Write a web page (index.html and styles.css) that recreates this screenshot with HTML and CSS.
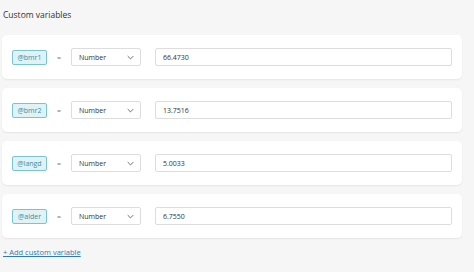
FILE: index.html
```html
<!DOCTYPE html>
<html lang="en">
<head>
  <meta charset="UTF-8" />
  <meta name="viewport" content="width=device-width, initial-scale=1.0" />
  <title>Custom variables</title>
  <link rel="stylesheet" href="styles.css">
</head>
<body>
  <div class="panel">
    <div class="title">Custom variables</div>

    <div class="card">
      <span class="badge">@bmr1</span>
      <span class="equals">=</span>
      <div class="select">
        <span>Number</span>
        <svg class="chevron" viewBox="0 0 10 6" width="7" height="5"><path d="M1 1l4 4 4-4" fill="none" stroke="#555" stroke-width="1.2"/></svg>
      </div>
      <div class="input">66.4730</div>
    </div>

    <div class="card">
      <span class="badge">@bmr2</span>
      <span class="equals">=</span>
      <div class="select">
        <span>Number</span>
        <svg class="chevron" viewBox="0 0 10 6" width="7" height="5"><path d="M1 1l4 4 4-4" fill="none" stroke="#555" stroke-width="1.2"/></svg>
      </div>
      <div class="input">13.7516</div>
    </div>

    <div class="card">
      <span class="badge">@langd</span>
      <span class="equals">=</span>
      <div class="select">
        <span>Number</span>
        <svg class="chevron" viewBox="0 0 10 6" width="7" height="5"><path d="M1 1l4 4 4-4" fill="none" stroke="#555" stroke-width="1.2"/></svg>
      </div>
      <div class="input">5.0033</div>
    </div>

    <div class="card">
      <span class="badge">@alder</span>
      <span class="equals">=</span>
      <div class="select">
        <span>Number</span>
        <svg class="chevron" viewBox="0 0 10 6" width="7" height="5"><path d="M1 1l4 4 4-4" fill="none" stroke="#555" stroke-width="1.2"/></svg>
      </div>
      <div class="input">6.7550</div>
    </div>

    <div class="add-row">
      <a class="add-link" href="#">+ Add custom variable</a>
    </div>
  </div>
</body>
</html>
```

FILE: styles.css
```css
body {
  margin: 0;
  background-color: #f6f6f6;
  font-family: 'Open Sans', 'Noto Sans', sans-serif;
  color: #333;
}

.panel {
  padding: 8px 12px 0 2px;
}

.title {
  font-size: 8.5px;
  line-height: 14px;
  padding-left: 1px;
  margin-bottom: 13px;
  color: #333;
}

.card {
  display: flex;
  align-items: center;
  height: 44px;
  margin-bottom: 9px;
  padding: 0 10px 0 10px;
  background: #fff;
  border-radius: 5px;
  box-shadow: 0 1px 2px rgba(0, 0, 0, 0.07);
  box-sizing: border-box;
  font-size: 7px;
}

.badge {
  width: 35px;
  height: 15px;
  box-sizing: border-box;
  display: flex;
  align-items: center;
  justify-content: center;
  background: #dff3f7;
  border: 1px solid #7cc3d2;
  border-radius: 2px;
  color: #3a8ea2;
}

.equals {
  width: 24px;
  text-align: center;
  color: #777;
}

.select {
  width: 70px;
  height: 18px;
  box-sizing: border-box;
  display: flex;
  align-items: center;
  justify-content: space-between;
  padding: 0 6px 0 7px;
  border: 1px solid #ddd;
  border-radius: 2px;
  color: #333;
}

.input {
  flex: 1;
  margin-left: 14px;
  height: 18px;
  box-sizing: border-box;
  display: flex;
  align-items: center;
  padding-left: 7px;
  border: 1px solid #ddd;
  border-radius: 2px;
  color: #333;
}

.add-row {
  line-height: 10px;
  padding-left: 1px;
  font-size: 7.5px;
}

.add-link {
  color: #2f7ab6;
  text-decoration: underline;
}
```
